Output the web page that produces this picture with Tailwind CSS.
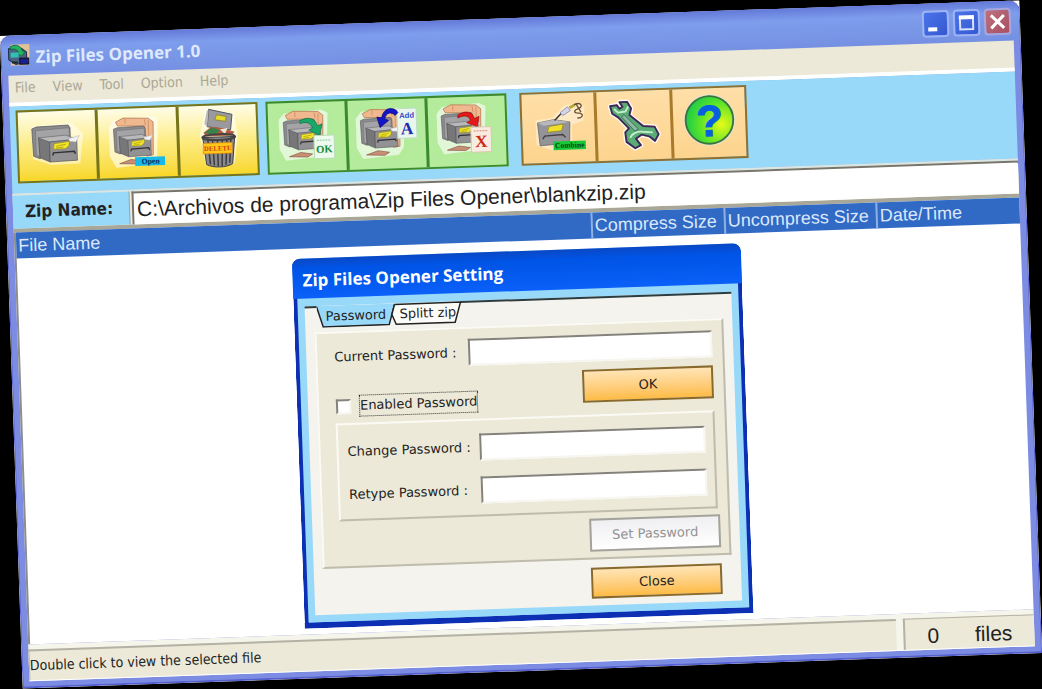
<!DOCTYPE html>
<html lang="en">
<head>
  <meta charset="UTF-8" />
  <meta name="viewport" content="width=device-width, initial-scale=1.0"/>
  <title>Zip Files Opener 1.0</title>
  <script src="https://cdn.jsdelivr.net/npm/@tailwindcss/browser@4"></script>
</head>
<body class="h-screen overflow-hidden bg-black px-[11px] py-[18px] font-['DejaVu_Sans_Condensed','DejaVu_Sans',sans-serif] text-[14px] text-[#222]">

  <!-- shared drawings -->
  <svg class="hidden" aria-hidden="true">
    <defs>
      <g id="cabinet">
        <path d="M15 17 20 15 55 14 57 17 57 27 34 32 23 50 16 47Z" fill="#8b8b8e" stroke="#55555a" stroke-width=".8"/>
        <path d="M19 19 56 17 56 26 23 28 23 48 19 46Z" fill="#a4a4a7" stroke="#6c6c70" stroke-width=".6"/>
        <path d="M22 27 34 32 34 54 23 49Z" fill="#77777a" stroke="#4c4c50" stroke-width=".7"/>
        <path d="M22 27 52 25 64 30 34 32Z" fill="#b9b9bc" stroke="#66666a" stroke-width=".7"/>
        <path d="M34 32 64 30 64 53 34 54Z" fill="#929295" stroke="#505054" stroke-width=".7"/>
        <path d="M39 34 56 32 55 37 51 40 38 40Z" fill="#f3e52a" stroke="#8f8412" stroke-width=".6"/>
        <path d="M41 37 52 35M41 39 49 38" stroke="#a09410" stroke-width=".8"/>
        <path d="M37 47 38 44 61 43 62 46" fill="none" stroke="#303034" stroke-width="1.6"/>
        <path d="M55 29 67 26 63 33 56 32Z" fill="#f2f2f2" stroke="#aaa" stroke-width=".5"/>
      </g>
      <g id="held">
        <path d="M17 12 55 9 61 12 59 49 54 56 18 59 12 48 12 18Z" fill="#fff" opacity=".6" stroke="#fff" stroke-width="2" stroke-linejoin="round"/>
        <path d="M18 13 26 9 52 10 57 14 56 48 49 49 48 18 20 17Z" fill="#efb88f" stroke="#b87850" stroke-width=".8"/>
        <path d="M28 10v5M48 11l1 6M52 12v34" stroke="#c98a60" stroke-width=".8"/>
        <path d="M21 56 33 52 45 54 40 57Z" fill="#c88f74" stroke="#8b5a48" stroke-width=".7"/>
        <use href="#cabinet" transform="translate(4 7) scale(.78)"/>
      </g>
    </defs>
  </svg>

  <div class="relative h-full -rotate-2 bg-white">
    <main class="flex h-full flex-col rounded-t-[10px] border-x border-b-2 border-[#5660cf] bg-[#7b8ce2] px-[6px] pb-[5px]">

      <!-- title bar -->
      <header class="-mx-[6px] flex h-10 shrink-0 items-center rounded-t-[9px] bg-linear-to-b from-[#6479d8] via-[#7e9dec] via-30% to-[#7590e2] pr-[8px] pl-[6px]">
        <svg class="size-6 shrink-0" viewBox="0 0 24 24">
          <rect x="3" y="1" width="19" height="21" fill="#e0c295"/>
          <path d="M1 5h13l5 4v10l-11 2-7-5z" fill="#4b6382" stroke="#203050"/>
          <path d="M3 3c6-3 11 0 12 5h3l-4 5-6-4h3C10 6 7 5 3 6z" fill="#22b55c" stroke="#145a50" stroke-width=".8"/>
          <path d="M3 9h8v5H3z" fill="#31c0b4"/>
          <path d="M12 15h9v6h-9z" fill="#1a2090" stroke="#111"/>
          <path d="M4 19h6" stroke="#222" stroke-width="2"/>
        </svg>
        <h1 class="ml-1 flex-1 pt-[3px] font-['Open_Sans',sans-serif] text-[17px] font-bold text-[#dfe8fd]">Zip Files Opener 1.0</h1>
        <div class="flex gap-1">
          <button aria-label="Minimize" class="size-[27px] rounded-[4px] border-2 border-[#9db4f4] bg-linear-to-br from-[#4c74ea] to-[#3557d0]">
            <svg class="size-full" viewBox="0 0 23 23"><path d="M4 17h9" stroke="#fff" stroke-width="4"/></svg>
          </button>
          <button aria-label="Maximize" class="size-[27px] rounded-[4px] border-2 border-[#9db4f4] bg-linear-to-br from-[#4c74ea] to-[#3557d0]">
            <svg class="size-full" viewBox="0 0 23 23"><path d="M5 6v12h13V6" fill="none" stroke="#d8e2ff" stroke-width="2"/><path d="M4 6h15" stroke="#fff" stroke-width="4"/></svg>
          </button>
          <button aria-label="Close window" class="size-[27px] rounded-[4px] border-2 border-[#a9a6dc] bg-linear-to-br from-[#bd6f7c] to-[#a85064]">
            <svg class="size-full" viewBox="0 0 23 23"><path d="M5 5 18 18M18 5 5 18" stroke="#fff" stroke-width="3"/></svg>
          </button>
        </div>
      </header>

      <!-- menu -->
      <nav class="flex h-[31px] shrink-0 items-start gap-[17px] border-b-4 border-white bg-[#ece9d8] px-[6px] pt-[2px] text-[#aba795]">
        <a href="#">File</a>
        <a href="#">View</a>
        <a href="#">Tool</a>
        <a href="#">Option</a>
        <a href="#">Help</a>
      </nav>

      <!-- toolbar -->
      <div class="flex shrink-0 bg-[#98d9fa] px-[6px] pt-1 pb-[10px]">
        <div class="flex h-[73px] w-[242px] divide-x-3 divide-[#77751a] border-2 border-[#77751a] bg-linear-to-b from-[#fffce6] via-[#fdec80] via-50% to-[#f8d724]">
          <button aria-label="New" class="flex-1">
            <svg class="h-[69px] w-full" viewBox="0 0 80 70">
              <path d="M14 14 56 12 67 24 63 54 33 55 14 48Z" fill="#fff" opacity=".5"/>
              <use href="#cabinet" transform="translate(0 1) scale(.94)"/>
            </svg>
          </button>
          <button aria-label="Open" class="flex-1">
            <svg class="h-[69px] w-full" viewBox="0 0 80 70">
              <use href="#held"/>
              <rect x="37" y="50" width="31" height="9" fill="#18b8e8"/>
              <text x="53" y="57" text-anchor="middle" class="fill-[#06306a] font-['Liberation_Serif',serif] text-[8px] font-bold">Open</text>
            </svg>
          </button>
          <button aria-label="Delete" class="flex-1">
            <svg class="h-[69px] w-full" viewBox="0 0 80 70">
              <path d="M28 2 57 8 60 32 56 60 40 64 26 60 21 30Z" fill="#fff" opacity=".6"/>
              <path d="M31 3 55 9 53 25 29 21Z" fill="#9a9a9e" stroke="#55555a"/>
              <path d="M31 3 29 21 26 18 29 5Z" fill="#bbb"/>
              <path d="M39 9 49 11 48 16 37 14Z" fill="#e8da2a" stroke="#777010" stroke-width=".6"/>
              <path d="M25 27 33 21 45 23 57 27 54 31 27 31Z" fill="#b55c40"/>
              <path d="M26 27 34 22 42 25 36 30Z" fill="#39834a"/>
              <path d="M42 24 50 23 47 29Z" fill="#f0e8d8"/>
              <path d="M24 32 57 32 54 60C47 64 34 64 27 60Z" fill="#8a8a8e" stroke="#39393c"/>
              <path d="M29 33l2 27M34 34l1 27M39 34v28M44 34l-1 28M49 34l-2 27M53 33l-2 26" stroke="#39393c" stroke-width="1.5"/>
              <ellipse cx="40.500" cy="32" rx="17" ry="3" fill="none" stroke="#444" stroke-width="2"/>
              <rect x="24" y="38" width="30" height="11" fill="#ffc718" stroke="#d98412" stroke-width=".7"/>
              <text x="39" y="46" text-anchor="middle" class="fill-[#d03a10] font-['Liberation_Serif',serif] text-[7px] font-bold">DELETE</text>
            </svg>
          </button>
        </div>

        <div class="ml-2 flex h-[73px] w-[241px] divide-x-3 divide-[#3c8a30] border-2 border-[#3c8a30] bg-[#b5eb9c]">
          <button aria-label="Test" class="flex-1">
            <svg class="h-[69px] w-full" viewBox="0 0 80 70">
              <use href="#held" transform="translate(0 -1)"/>
              <path d="M33 18C42 13 50 17 51 24L56 22 53 34 42 28 46 26C44 20 39 19 33 21Z" fill="#18a868" stroke="#0b7040" stroke-width=".7"/>
              <rect x="47" y="34" width="21" height="24" fill="#eefaee" stroke="#b8dcb4"/>
              <path d="M50 39h14" stroke="#7cc898" stroke-dasharray="2 1"/>
              <text x="57.500" y="52" text-anchor="middle" class="fill-[#138a3a] font-['Liberation_Serif',serif] text-[11px] font-bold">OK</text>
            </svg>
          </button>
          <button aria-label="Add" class="flex-1">
            <svg class="h-[69px] w-full" viewBox="0 0 80 70">
              <use href="#held" transform="translate(-3 0)"/>
              <rect x="51" y="9" width="20" height="31" fill="#e9f6ee" stroke="#bcdcc8"/>
              <path d="M52 13C48 6 37 7 35 18L30 17 33 28 42 21 38 19C40 12 46 12 49 16Z" fill="#1414c8" stroke="#08086c" stroke-width=".7"/>
              <text x="61" y="19" text-anchor="middle" class="fill-[#3848c8] font-['Liberation_Sans',sans-serif] text-[8px] font-bold">Add</text>
              <text x="61" y="36" text-anchor="middle" class="fill-[#1c2cb0] font-['Liberation_Serif',serif] text-[18px] font-bold">A</text>
            </svg>
          </button>
          <button aria-label="Remove" class="flex-1">
            <svg class="h-[69px] w-full" viewBox="0 0 80 70">
              <use href="#held" transform="translate(-2 -2)"/>
              <path d="M31 18C40 12 47 16 48 22L53 20 51 31 40 26 44 24C42 18 37 18 31 21Z" fill="#e81818" stroke="#901010" stroke-width=".7"/>
              <rect x="44" y="31" width="21" height="26" fill="#f8ece0" stroke="#d8c8b0"/>
              <path d="M47 35h14" stroke="#e08070" stroke-dasharray="2 1"/>
              <text x="54.500" y="52" text-anchor="middle" class="fill-[#d02818] font-['Liberation_Serif',serif] text-[18px] font-bold">X</text>
            </svg>
          </button>
        </div>

        <div class="ml-[13px] flex h-[73px] w-[227px] divide-x-3 divide-[#a87a2c] border-2 border-[#8e7030] bg-linear-to-b from-[#ffdfa8] to-[#fdd48e]">
          <button aria-label="Combine" class="flex-1">
            <svg class="h-[69px] w-full" viewBox="0 0 76 70">
              <path d="M14 26 32 24 44 12 60 8 66 14 64 28 52 32 52 48 50 56 30 58 14 52Z" fill="#fff" opacity=".4"/>
              <path d="M16 29 33 26 50 29 49 51 18 53Z" fill="#949498" stroke="#626266" stroke-width=".8"/>
              <path d="M16 29 33 26 50 29 22 32Z" fill="#b8b8ba"/>
              <path d="M28 33 43 31 41 38 26 39Z" fill="#f0e02a" stroke="#8c8420" stroke-width=".7"/>
              <path d="M21 46 23 43 42 42 45 45" fill="none" stroke="#404044" stroke-width="1.500"/>
              <path d="M34 27 42 19" stroke="#333" stroke-width="1.500"/>
              <path d="M40 19 48 13 51 17 43 22Z" fill="#d4d4ea" stroke="#77779a" stroke-width=".7"/>
              <path d="M50 14 56 11" stroke="#b8a838" stroke-width="3"/>
              <path d="M55 11C62 8 65 13 60 15 54 17 54 20 60 20 66 21 63 26 58 25M57 10 62 19" fill="none" stroke="#6a5030" stroke-width="1.400"/>
              <rect x="32" y="49" width="34" height="9" fill="#18c838"/>
              <text x="49" y="56" text-anchor="middle" class="fill-[#064414] font-['Liberation_Serif',serif] text-[8px] font-bold">Combine</text>
            </svg>
          </button>
          <button aria-label="Settings" class="flex-1">
            <svg class="h-[69px] w-full" viewBox="0 0 76 70">
              <g stroke-linejoin="round">
                <path d="M24 10 32 10 36 17 34 24 48 36 60 37 64 45 60 52 54 47 46 45 40 49 45 56 39 59 30 52 29 42 33 38 22 26 16 22 14 14 21 13 24 17 27 15Z" fill="#fff" stroke="#fff" stroke-width="5" opacity=".8"/>
                <path d="M24 10 32 10 36 17 34 24 48 36 60 37 64 45 60 52 54 47 46 45 40 49 45 56 39 59 30 52 29 42 33 38 22 26 16 22 14 14 21 13 24 17 27 15Z" fill="#58ac74" stroke="#3e2658" stroke-width="2"/>
                <path d="M28 23 43 39 39 41 26 26Z" fill="#88b8a0" stroke="#3e5a50" stroke-width=".8"/>
                <path d="M34 48C36 43 42 41 48 42L58 43M18 17 22 21 30 20 33 15" fill="none" stroke="#c2ecca" stroke-width="2"/>
              </g>
            </svg>
          </button>
          <button aria-label="Help" class="flex-1">
            <svg class="h-[69px] w-full" viewBox="0 0 76 70">
              <defs>
                <radialGradient id="lime" cx=".75" cy=".6" r=".75">
                  <stop offset="0" stop-color="#e6fa18"/>
                  <stop offset=".6" stop-color="#5ce428"/>
                  <stop offset="1" stop-color="#1ccc48"/>
                </radialGradient>
              </defs>
              <circle cx="38" cy="32" r="27" fill="#e4e4d0"/>
              <circle cx="38" cy="32" r="25" fill="url(#lime)" stroke="#3c7440" stroke-width="2"/>
              <text x="38" y="49" text-anchor="middle" class="fill-[#0860e0] stroke-[#0860e0] font-['Liberation_Sans',sans-serif] text-[46px] font-bold">?</text>
            </svg>
          </button>
        </div>
      </div>

      <!-- archive path -->
      <div class="flex h-[39px] shrink-0 border-t-2 border-b-4 border-t-[#d8e6e4] border-b-[#a9a798] bg-[#ece9d8]">
        <label for="zipName" class="flex w-[117px] items-center border-r border-[#9aa8a8] bg-[#98d9fa] pl-[12px] text-[17px] font-bold">Zip Name:</label>
        <input id="zipName" type="text" value="C:\Archivos de programa\Zip Files Opener\blankzip.zip" class="ml-[2px] min-w-0 flex-1 border-t-2 border-l-2 border-[#77756c] bg-white px-[3px] font-['Liberation_Sans',sans-serif] text-[21px] leading-7" />
      </div>

      <!-- file list -->
      <section class="min-h-0 flex-1 border-l-2 border-[#8d8d90] bg-white">
        <table class="w-full table-fixed border-collapse bg-[#316ac5] text-left font-['Liberation_Sans',sans-serif] text-[18px] leading-[25px] text-[#dbe8fb]">
          <thead>
            <tr>
              <th class="px-[2px] pt-px pb-0 font-normal">File Name</th>
              <th class="w-[133px] border-l-2 border-[#8fb0e4] px-[2px] pt-px pb-0 font-normal whitespace-nowrap">Compress Size</th>
              <th class="w-[152px] border-l-2 border-[#8fb0e4] px-[2px] pt-px pb-0 font-normal whitespace-nowrap">Uncompress Size</th>
              <th class="w-[143px] border-l-2 border-[#8fb0e4] px-[2px] pt-px pb-0 font-normal">Date/Time</th>
            </tr>
          </thead>
        </table>
      </section>

      <!-- status bar -->
      <footer class="flex h-[37px] shrink-0 gap-[7px] border-b border-white bg-[#f6f5ec] pt-[5px]">
        <p class="flex flex-1 items-center border-t-2 border-l border-[#b4b2a4] bg-[#ece9d8]">Double click to view the selected file</p>
        <p class="flex w-[131px] items-center justify-between border-t border-l-2 border-[#b4b2a4] bg-[#ece9d8] px-[22px] pt-1 font-['Liberation_Sans',sans-serif] text-[21px]"><span>0</span><span>files</span></p>
      </footer>
    </main>

    <!-- settings dialog -->
    <div role="dialog" aria-labelledby="settingsTitle" class="absolute top-[233px] left-[284px] w-[449px] rounded-t-[8px] border-x-4 border-b-6 border-[#0c2fb4] bg-[#98d9fa] font-['DejaVu_Sans',sans-serif] text-[13px]">
      <h2 id="settingsTitle" class="-mx-1 flex h-10 items-center rounded-t-[8px] bg-linear-to-b from-[#0a48c4] via-[#0054e6] via-25% to-[#0a60f8] pt-[3px] pl-[10px] font-['Open_Sans',sans-serif] text-[17px] font-bold text-white">Zip Files Opener Setting</h2>
      <div class="mx-[7px] mt-2 mb-[7px] bg-[#f4f3ee] pb-[7px]">

        <div class="flex h-[22px] items-start">
          <span class="w-[12px] border-t-2 border-[#2c3c40]"></span>
          <button class="relative h-[22px] w-[78px]">
            <svg class="absolute inset-0 size-full" viewBox="0 0 78 22"><path d="M0 0H78L72 21H6Z" fill="#98d9fa"/><path d="M0 1 6 21H72L78 1" fill="none" stroke="#222" stroke-width="1.500"/></svg>
            <span class="relative">Password</span>
          </button>
          <button class="relative h-[22px] w-[66px]">
            <svg class="absolute inset-0 size-full overflow-visible" viewBox="0 0 66 22"><path d="M0 1H66L60 21H1L-3 11Z" fill="#fbfbf8"/><path d="M0 1-3 11 1 21H60L66 1H0" fill="none" stroke="#222" stroke-width="1.500"/></svg>
            <span class="relative">Splitt zip</span>
          </button>
          <span class="flex-1 border-t-2 border-[#2c3c40]"></span>
        </div>

        <form class="mt-1 mr-[9px] ml-[9px] flex h-[237px] flex-col border-2 border-t-[#fbfaf4] border-r-[#bfbcae] border-b-[#bfbcae] border-l-[#fbfaf4] bg-[#ece9d8] px-[10px] pt-[10px]">
          <div class="flex items-center justify-between pl-[7px]">
            <label for="currentPassword">Current Password :</label>
            <input id="currentPassword" type="password" class="h-[27px] w-[244px] border-2 border-t-[#84827a] border-r-[#f7f6f0] border-b-[#f7f6f0] border-l-[#84827a] bg-white px-1" />
          </div>
          <button type="button" class="mt-2 h-[33px] w-[131px] self-end border-2 border-[#8a6a2c] bg-linear-to-b from-[#ffe4b4] to-[#fdbb42]">OK</button>
          <div class="-mt-4 flex h-[22px] items-center gap-2 pl-[7px]">
            <input id="enabled" type="checkbox" class="size-[15px] appearance-none border-2 border-t-[#84827a] border-r-[#f7f6f0] border-b-[#f7f6f0] border-l-[#84827a] bg-white" />
            <label for="enabled" class="border border-dotted border-[#333] leading-5">Enabled Password</label>
          </div>
          <fieldset class="mt-[6px] ml-[6px] flex h-[98px] flex-col gap-4 border-2 border-t-[#fbfaf4] border-r-[#bfbcae] border-b-[#bfbcae] border-l-[#fbfaf4] pt-[13px] pr-2 pl-[9px]">
            <div class="flex items-center justify-between">
              <label for="changePassword">Change Password :</label>
              <input id="changePassword" type="password" class="h-[27px] w-[226px] border-2 border-t-[#84827a] border-r-[#f7f6f0] border-b-[#f7f6f0] border-l-[#84827a] bg-white px-1" />
            </div>
            <div class="flex items-center justify-between">
              <label for="retypePassword">Retype Password :</label>
              <input id="retypePassword" type="password" class="h-[27px] w-[226px] border-2 border-t-[#84827a] border-r-[#f7f6f0] border-b-[#f7f6f0] border-l-[#84827a] bg-white px-1" />
            </div>
          </fieldset>
          <button type="submit" disabled class="mt-[6px] -mr-[2px] h-[33px] w-[131px] self-end border-2 border-[#a3a29c] bg-linear-to-b from-[#efeff2] to-white text-[#929292]">Set Password</button>
        </form>

        <div class="mt-2 mr-[19px] flex justify-end">
          <button class="h-[31px] w-[131px] border-2 border-[#8a6a2c] bg-linear-to-b from-[#ffe4b4] to-[#fdbb42]">Close</button>
        </div>
      </div>
    </div>
  </div>

</body>
</html>
